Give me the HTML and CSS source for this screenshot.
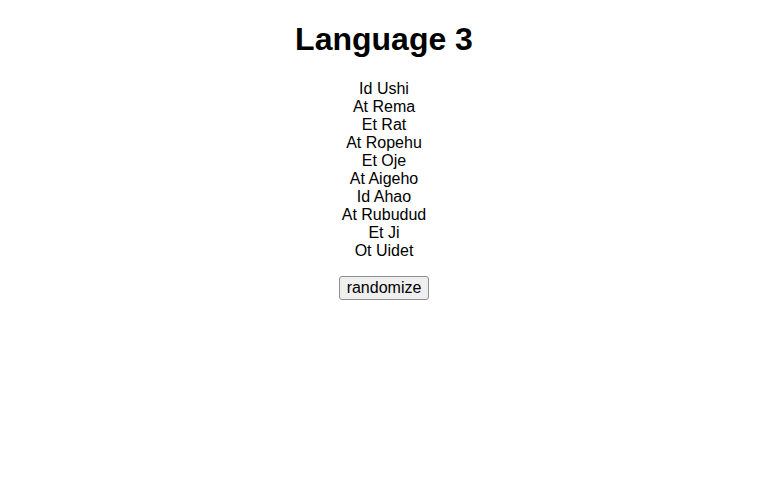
FILE: index.html
```html
<!DOCTYPE html>
<html>
<head>
<meta charset="utf-8">
<link rel="stylesheet" href="styles.css">
</head>
<body>
<h1 class="title">Language 3</h1>
<div class="words">
<div>Id Ushi</div>
<div>At Rema</div>
<div>Et Rat</div>
<div>At Ropehu</div>
<div>Et Oje</div>
<div>At Aigeho</div>
<div>Id Ahao</div>
<div>At Rubudud</div>
<div>Et Ji</div>
<div>Ot Uidet</div>
</div>
<p class="actions"><button class="btn">randomize</button></p>
</body>
</html>
```
FILE: styles.css
```css
body {
  margin: 0 8px;
  font-family: "Liberation Sans", Arial, sans-serif;
  font-size: 16px;
  line-height: 18px;
  text-align: center;
  color: #000;
  background: #fff;
}
.title {
  font-size: 32px;
  line-height: 37px;
  font-weight: bold;
  margin: 21px 0 22px;
}
.words {
  line-height: 18px;
}
.actions {
  margin: 16px 0;
}
.btn {
  font-family: "Liberation Sans", Arial, sans-serif;
  font-size: 16px;
  line-height: 18px;
  padding: 2px 7px;
  color: #000;
  background: #efefef;
  border: 1px solid #8f8f8f;
  border-radius: 3px;
}
```
